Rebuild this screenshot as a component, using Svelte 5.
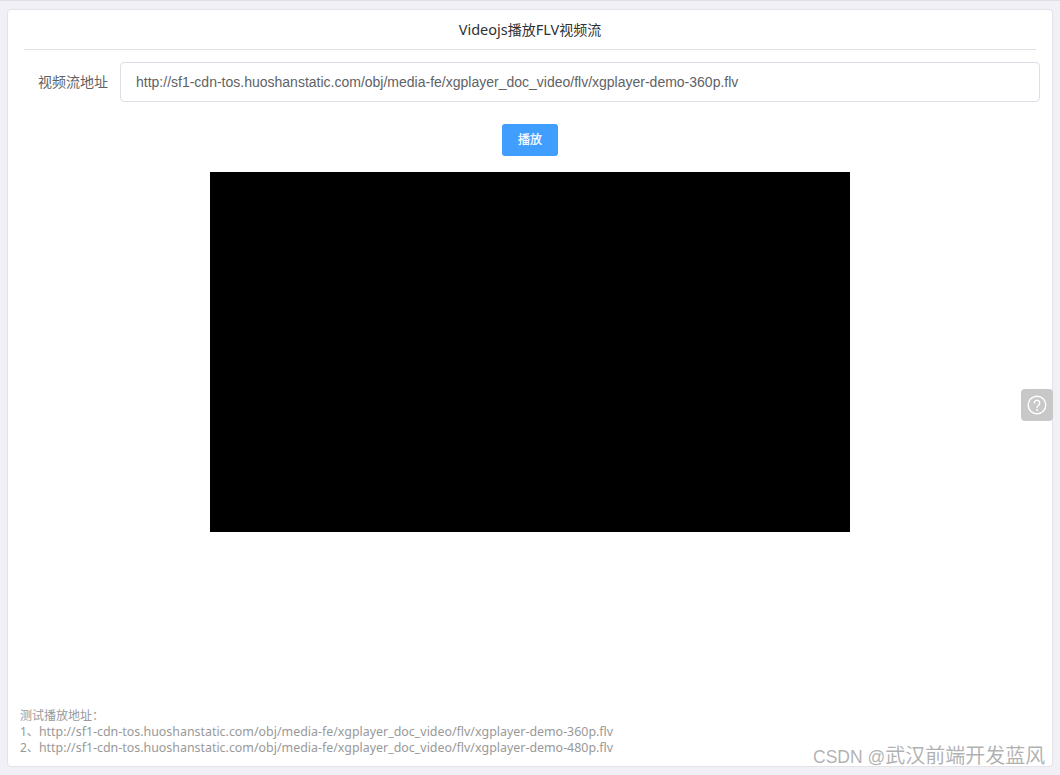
<script>
  const urls = [
    'http://sf1-cdn-tos.huoshanstatic.com/obj/media-fe/xgplayer_doc_video/flv/xgplayer-demo-360p.flv',
    'http://sf1-cdn-tos.huoshanstatic.com/obj/media-fe/xgplayer_doc_video/flv/xgplayer-demo-480p.flv'
  ];
</script>

<div class="page">
  <main class="card">
    <h1 class="title"><span class="latin">Videojs</span>播放<span class="latin">FLV</span>视频流</h1>
    <div class="form-row">
      <label class="label" for="src">视频流地址</label>
      <input id="src" class="input" value={urls[0]} />
    </div>
    <div class="actions">
      <button class="play"><span>播放</span></button>
    </div>
    <div class="video"></div>
    <div class="notes">
      <div>测试播放地址：</div>
      {#each urls as url, i}
        <div>{i + 1}、<span class="url">{url}</span></div>
      {/each}
    </div>
  </main>

  <div class="help">
    <svg width="20" height="20" viewBox="0 0 20 20" fill="none" stroke="#fff" stroke-width="1.4">
      <circle cx="10" cy="10" r="8.8" />
      <path d="M7.3 8a2.7 2.7 0 1 1 4.3 2.2c-1 .7-1.6 1.2-1.6 2.3" stroke-linecap="round" />
      <circle cx="10" cy="15" r=".9" fill="#fff" stroke="none" />
    </svg>
  </div>
  <div class="watermark"><span class="mark-latin">CSDN @</span>武汉前端开发蓝风</div>
</div>

<style>
  :global(body) {
    margin: 0;
    background: #f0f0f6;
  }
  .page {
    position: relative;
    box-sizing: border-box;
    height: 775px;
    padding: 9px 7px 7px;
    border-top: 1px solid #e0e0e6;
    overflow: hidden;
    font-family: "Liberation Sans", "Noto Sans CJK SC", sans-serif;
  }
  .card {
    box-sizing: border-box;
    height: 758px;
    margin-top: -1px;
    background: #fff;
    border: 1px solid #e4e4e8;
    border-radius: 4px;
    padding: 0 12px 10px;
    display: flex;
    flex-direction: column;
  }
  .title {
    box-sizing: border-box;
    margin: 0 4px;
    height: 40px;
    line-height: 38px;
    border-bottom: 1px solid #e2e2e6;
    text-align: center;
    font-size: 14px;
    font-weight: 400;
    color: #303133;
    font-family: "Noto Sans", "Noto Sans CJK SC", sans-serif;
  }
  .latin {
    font-size: 14.5px;
  }
  .form-row {
    display: flex;
    align-items: center;
    margin-top: 12px;
  }
  .label {
    width: 88px;
    margin-right: 12px;
    padding-bottom: 2px;
    text-align: right;
    font-size: 14px;
    color: #606266;
    flex: none;
    font-family: "Noto Sans CJK SC", sans-serif;
  }
  .input {
    box-sizing: border-box;
    flex: 1;
    min-width: 0;
    height: 40px;
    padding: 0 15px;
    border: 1px solid #dcdfe6;
    border-radius: 4px;
    font: 14px "Liberation Sans", sans-serif;
    color: #606266;
    outline: none;
  }
  .actions {
    display: flex;
    justify-content: center;
    margin-top: 22px;
  }
  .play {
    width: 56px;
    height: 32px;
    padding: 0 0 3px;
    border: 0;
    border-radius: 3px;
    background: #409eff;
    color: #fff;
    font-size: 12px;
    font-weight: 400;
    -webkit-text-stroke: 0.25px #fff;
    font-family: "Noto Sans CJK SC", sans-serif;
  }
  .video {
    align-self: center;
    width: 640px;
    height: 360px;
    margin-top: 16px;
    background: #000;
  }
  .notes {
    margin-top: auto;
    font-size: 12px;
    line-height: 16px;
    color: #999;
    font-family: "Noto Sans", "Noto Sans CJK SC", sans-serif;
  }
  .url {
    font-size: 12.41px;
  }
  .help {
    position: absolute;
    left: 1021px;
    top: 388px;
    width: 32px;
    height: 32px;
    border-radius: 4px;
    background: #c8c8c8;
    display: flex;
    align-items: center;
    justify-content: center;
  }
  .watermark {
    position: absolute;
    left: 813px;
    top: 740px;
    font-size: 20px;
    line-height: 28px;
    color: rgba(100, 100, 100, 0.5);
    white-space: nowrap;
    font-family: "Noto Sans CJK SC", sans-serif;
  }
  .mark-latin {
    font-size: 17.5px;
    font-family: "Liberation Sans", sans-serif;
  }
</style>
